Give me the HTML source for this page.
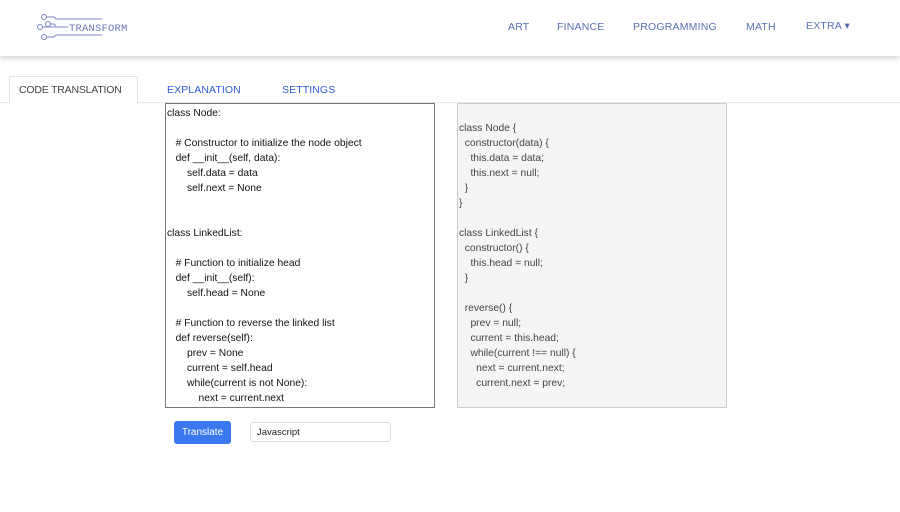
<!DOCTYPE html>
<html><head><style>
body{margin:0;width:900px;height:512px;background:#fff;font-family:"Liberation Sans",sans-serif;position:relative;overflow:hidden}
.nav{position:absolute;left:0;top:0;width:900px;height:56px;background:#fff;box-shadow:0 2px 6px rgba(0,0,0,.18)}
.nav a{position:absolute;top:21px;font-size:10.5px;color:#5a6fb0;letter-spacing:.2px;text-decoration:none}
.tabs{position:absolute;top:102px;left:0;width:900px;border-top:1px solid #e9e9e9}
.tab{position:absolute;font-size:10.5px;letter-spacing:.1px;top:84px}
.box{position:absolute;top:103px;height:305px;border:1px solid #888;box-sizing:border-box;overflow:hidden}
pre{margin:0;font-family:"Liberation Sans",sans-serif;font-size:10.3px;line-height:15px;color:#111}
</style></head><body>
<div class="nav">
<svg style="position:absolute;left:36px;top:12px" width="100" height="30" viewBox="0 0 100 30" fill="none" stroke="#7b86c4" stroke-width="1">
<circle cx="8" cy="5" r="2.5"/><path d="M10.5 5H18L20 7H66"/>
<circle cx="4" cy="15" r="2.5"/><circle cx="12" cy="12" r="2.5"/><path d="M6.5 15H32M14.5 12H18L20 14"/>
<circle cx="8" cy="25" r="2.5"/><path d="M10.5 25H18L20 23H66"/>
<text x="33" y="19" fill="#6a76b8" stroke="none" font-size="10.5" font-family="Liberation Mono" letter-spacing="0.2">TRANSFORM</text>
</svg>
<a style="left:508px">ART</a><a style="left:557px">FINANCE</a><a style="left:633px">PROGRAMMING</a><a style="left:746px">MATH</a><a style="left:806px;top:20px">EXTRA ▾</a>
</div>
<div class="tabs"></div>
<div style="position:absolute;left:9px;top:76px;width:127px;height:27px;border:1px solid #e3e3e3;border-bottom:none;background:#fff"></div>
<div class="tab" style="left:19px;color:#444;letter-spacing:-0.2px">CODE TRANSLATION</div>
<div class="tab" style="left:167px;color:#2f5bd8">EXPLANATION</div>
<div class="tab" style="left:282px;color:#2f5bd8">SETTINGS</div>
<div class="box" style="left:165px;width:270px;background:#fff;border-color:#777">
<pre style="padding:2px 0 0 1px">class Node:

   # Constructor to initialize the node object
   def __init__(self, data):
       self.data = data
       self.next = None


class LinkedList:

   # Function to initialize head
   def __init__(self):
       self.head = None

   # Function to reverse the linked list
   def reverse(self):
       prev = None
       current = self.head
       while(current is not None):
           next = current.next</pre></div>
<div class="box" style="left:457px;width:270px;background:#f5f5f5;border-color:#ccc">
<pre style="padding:17px 0 0 1px;color:#444">class Node {
  constructor(data) {
    this.data = data;
    this.next = null;
  }
}

class LinkedList {
  constructor() {
    this.head = null;
  }

  reverse() {
    prev = null;
    current = this.head;
    while(current !== null) {
      next = current.next;
      current.next = prev;</pre></div>
<div style="position:absolute;left:174px;top:421px;width:57px;height:23px;background:#3b78f0;border-radius:3px;color:#fff;font-size:10px;line-height:23px;text-align:center">Translate</div>
<div style="position:absolute;left:250px;top:422px;width:141px;height:20px;border:1px solid #ddd;border-radius:3px;box-sizing:border-box;font-size:9.5px;line-height:20px;padding-left:6px;color:#222">Javascript</div>
</body></html>
